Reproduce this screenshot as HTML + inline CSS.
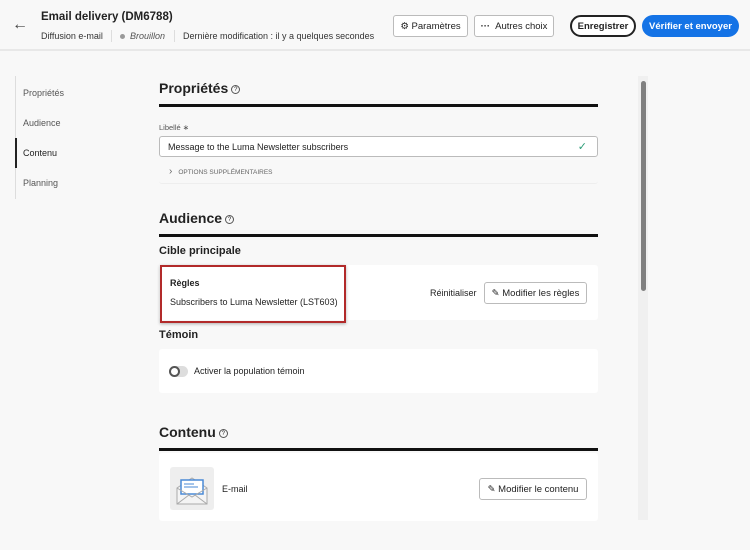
<!DOCTYPE html>
<html><head><meta charset="utf-8"><style>
*{box-sizing:border-box;margin:0;padding:0}
body{width:750px;height:550px;overflow:hidden;background:#f8f8f8;font-family:"Liberation Sans",sans-serif;color:#222;position:relative;font-size:9px}
.a{position:absolute}
.btn{position:absolute;border:1px solid #bbb;border-radius:3px;background:#fff;font-size:9.5px;display:flex;align-items:center;justify-content:center;gap:5px;color:#222}
.h{font-size:14px;font-weight:bold;color:#222}
.q{display:inline-block;width:9px;height:9px;border:1px solid #555;border-radius:50%;font-size:6px;text-align:center;line-height:8px;vertical-align:2px;margin-left:3px;font-weight:normal}
.line{position:absolute;left:159px;width:439px;height:3px;background:#111}
.card{position:absolute;left:159px;width:439px;background:#fff;border-radius:3px}
</style></head><body>
<div class="a" style="left:0;top:0;width:750px;height:51px;background:#f8f8f8;border-bottom:2px solid #e8e8e8"></div>
<div class="a" style="left:12px;top:16px;font-size:16px;color:#444">&#8592;</div>
<div class="a" style="left:41px;top:11px;font-size:11.5px;font-weight:bold">Email delivery (DM6788)</div>
<div class="a" style="left:41px;top:31px;font-size:9px;color:#333">Diffusion e-mail</div>
<div class="a" style="left:111px;top:30px;width:1px;height:12px;background:#ddd"></div>
<div class="a" style="left:120px;top:34px;width:5px;height:5px;border-radius:50%;background:#999"></div>
<div class="a" style="left:130px;top:31px;font-size:9px;color:#555;font-style:italic">Brouillon</div>
<div class="a" style="left:174px;top:30px;width:1px;height:12px;background:#ddd"></div>
<div class="a" style="left:183px;top:31px;font-size:9px;color:#333">Dernière modification : il y a quelques secondes</div>
<div class="btn" style="left:393px;top:15px;width:75px;height:22px">⚙ Paramètres</div>
<div class="btn" style="left:474px;top:15px;width:80px;height:22px"><b>···</b> Autres choix</div>
<div class="btn" style="left:570px;top:15px;width:66px;height:22px;border:2px solid #222;border-radius:12px;font-weight:bold">Enregistrer</div>
<div class="btn" style="left:642px;top:15px;width:97px;height:22px;border:none;border-radius:12px;background:#1473e6;color:#fff;font-weight:bold">Vérifier et envoyer</div>

<div class="a" style="left:15px;top:76px;width:1px;height:123px;background:#ddd"></div>
<div class="a" style="left:15px;top:138px;width:2px;height:30px;background:#222"></div>
<div class="a" style="left:23px;top:88px;font-size:9px;color:#555">Propriétés</div>
<div class="a" style="left:23px;top:118px;font-size:9px;color:#555">Audience</div>
<div class="a" style="left:23px;top:148px;font-size:9px;color:#222">Contenu</div>
<div class="a" style="left:23px;top:178px;font-size:9px;color:#555">Planning</div>

<div class="a h" style="left:159px;top:80px">Propriétés<span class="q">?</span></div>
<div class="line" style="top:104px"></div>
<div class="card" style="top:112px;height:72px;background:#f8f8f8;border-bottom:1px solid #eee"></div>
<div class="a" style="left:159px;top:123px;font-size:7.5px;color:#555">Libellé ∗</div>
<div class="a" style="left:159px;top:136px;width:439px;height:21px;background:#fff;border:1px solid #bbb;border-radius:3px;padding:5px 8px;font-size:9px">Message to the Luma Newsletter subscribers<span style="position:absolute;right:10px;top:3px;color:#2d9d78;font-size:11px">✓</span></div>
<div class="a" style="left:169px;top:166px;font-size:6.5px;color:#666"><span style="font-size:10px;margin-right:6px">›</span>OPTIONS SUPPLÉMENTAIRES</div>

<div class="a h" style="left:159px;top:210px">Audience<span class="q">?</span></div>
<div class="line" style="top:234px"></div>
<div class="a" style="left:159px;top:245px;font-size:11px;font-weight:bold">Cible principale</div>
<div class="card" style="top:265px;height:55px"></div>
<div class="a" style="left:160px;top:265px;width:186px;height:58px;border:2px solid #b22a2a;box-shadow:0 1px 3px rgba(0,0,0,.3)"></div>
<div class="a" style="left:170px;top:278px;font-size:9px;font-weight:bold">Règles</div>
<div class="a" style="left:170px;top:297px;font-size:9px">Subscribers to Luma Newsletter (LST603)</div>
<div class="a" style="left:430px;top:288px;font-size:9px">Réinitialiser</div>
<div class="btn" style="left:484px;top:282px;width:103px;height:22px">✎ Modifier les règles</div>
<div class="a" style="left:159px;top:329px;font-size:11px;font-weight:bold">Témoin</div>
<div class="card" style="top:349px;height:44px"></div>
<div class="a" style="left:169px;top:366px;width:19px;height:11px;border-radius:6px;background:#ddd"></div>
<div class="a" style="left:169px;top:366px;width:11px;height:11px;border-radius:50%;border:2px solid #555;background:#fff"></div>
<div class="a" style="left:194px;top:366px;font-size:9px">Activer la population témoin</div>

<div class="a h" style="left:159px;top:424px">Contenu<span class="q">?</span></div>
<div class="line" style="top:448px"></div>
<div class="card" style="top:453px;height:68px"></div>
<div class="a" style="left:170px;top:467px;width:44px;height:43px;background:#eee;border-radius:3px">
<svg width="44" height="43" viewBox="0 0 44 43"><path d="M7 21 L22 11 L37 21 V37 H7 Z" fill="#f4f4f4" stroke="#aaa"/><rect x="11" y="13" width="22" height="14" fill="#fff" stroke="#4a8ad6" stroke-width="1.5"/><path d="M14 17h10M14 20h14" stroke="#4a8ad6"/><path d="M7 21 L22 30 L37 21 M7 37 L19 28 M37 37 L25 28" fill="none" stroke="#aaa"/></svg></div>
<div class="a" style="left:222px;top:484px;font-size:9px">E-mail</div>
<div class="btn" style="left:479px;top:478px;width:108px;height:22px">✎ Modifier le contenu</div>

<div class="a" style="left:638px;top:76px;width:10px;height:444px;background:#f0f0f0"></div>
<div class="a" style="left:641px;top:81px;width:5px;height:210px;background:#808080;border-radius:3px"></div>
</body></html>
